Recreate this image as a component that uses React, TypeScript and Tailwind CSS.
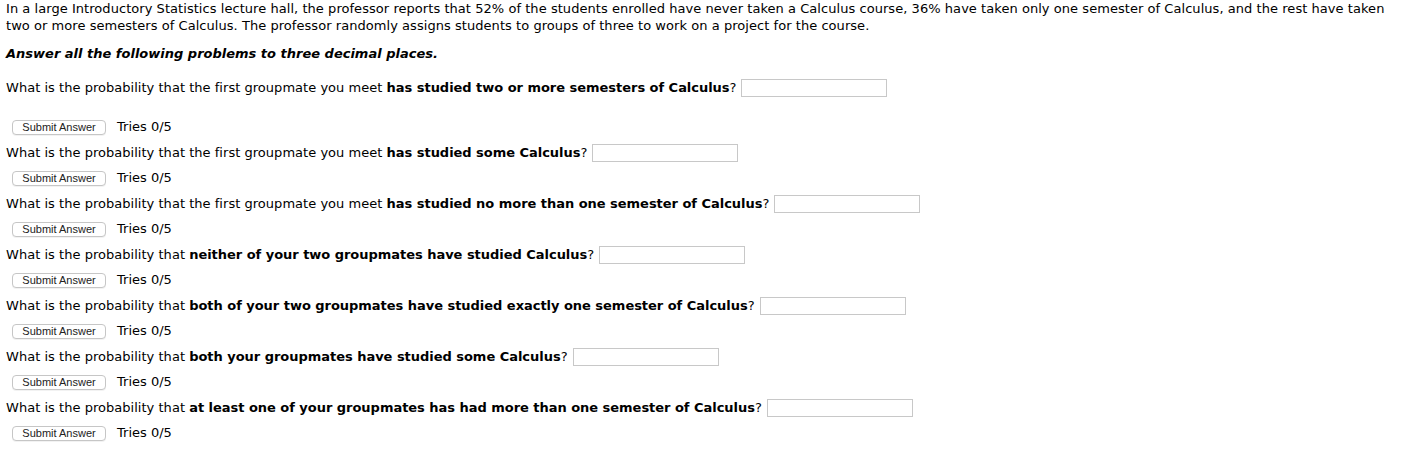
const QUESTIONS: { pre: string; bold: string; first?: boolean }[] = [
  { pre: "What is the probability that the first groupmate you meet ", bold: "has studied two or more semesters of Calculus", first: true },
  { pre: "What is the probability that the first groupmate you meet ", bold: "has studied some Calculus" },
  { pre: "What is the probability that the first groupmate you meet ", bold: "has studied no more than one semester of Calculus" },
  { pre: "What is the probability that ", bold: "neither of your two groupmates have studied Calculus" },
  { pre: "What is the probability that ", bold: "both of your two groupmates have studied exactly one semester of Calculus" },
  { pre: "What is the probability that ", bold: "both your groupmates have studied some Calculus" },
  { pre: "What is the probability that ", bold: "at least one of your groupmates has had more than one semester of Calculus" },
];

function Question({ pre, bold, first }: { pre: string; bold: string; first?: boolean }) {
  return (
    <div>
      <div className={`flex items-center h-[25px] ${first ? "mb-[14px]" : ""}`}>
        <span className="whitespace-pre tracking-[0.03px]">{pre}</span>
        <b className="font-bold tracking-[-0.03px]">{bold}</b>
        <span>?</span>
        <input type="text" className="ml-[5px] w-[146px] h-[18px] border border-[#c8c8c8] bg-white outline-none" />
      </div>
      <div className="flex items-center h-[26px]">
        <button className="ml-[6px] w-[94px] h-[15px] rounded-[4px] border border-[#c6c6c6] bg-white text-[11px] leading-none text-[#222] font-['Liberation_Sans',sans-serif] flex items-center justify-center shadow-[0_1px_0_rgba(0,0,0,0.05)]">
          Submit Answer
        </button>
        <span className="ml-[11px]">Tries 0/5</span>
      </div>
    </div>
  );
}

export default function App() {
  return (
    <div className="bg-white w-[1413px] h-[455px] overflow-hidden px-[6px] text-[13px] text-[#000] font-['DejaVu_Sans','Verdana',sans-serif]">
      <p className="leading-[17px] pr-[16px] tracking-[0.05px]">
        In a large Introductory Statistics lecture hall, the professor reports that 52% of the students enrolled have never taken a Calculus course, 36% have taken only one semester of Calculus, and the rest have taken two or more semesters of Calculus. The professor randomly assigns students to groups of three to work on a project for the course.
      </p>
      <p className="mt-[11px] leading-[17px] font-bold italic">Answer all the following problems to three decimal places.</p>
      <div className="mt-[13px]">
        {QUESTIONS.map((q, i) => (
          <Question key={i} {...q} />
        ))}
      </div>
    </div>
  );
}
